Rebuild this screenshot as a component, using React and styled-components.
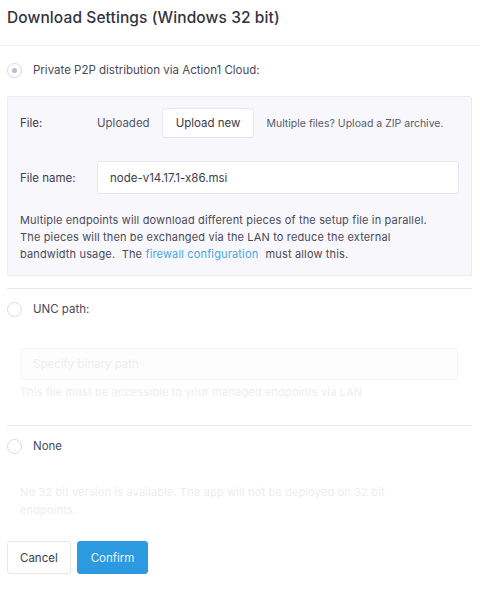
import React from "react";
import styled, { createGlobalStyle } from "styled-components";

const Global = createGlobalStyle`
  html, body { margin: 0; padding: 0; background: #fff; }
  body { font-family: Inter, "Noto Sans", sans-serif; color: #3c3c4a; }
  * { box-sizing: border-box; }
`;

const Page = styled.div`
  width: 480px;
  height: 593px;
  background: #fff;
  display: flex;
  flex-direction: column;
`;

const Title = styled.h1`
  margin: 0;
  padding: 7px 7px 0;
  height: 46px;
  font-size: 15.5px;
  font-weight: 500;
  color: #33333f;
  letter-spacing: 0.1px;
  line-height: 22px;
  border-bottom: 1px solid #ececf2;
`;

const Body = styled.div`
  padding: 0 8px 0 7px;
  display: flex;
  flex-direction: column;
`;

const Section = styled.div`
  display: flex;
  flex-direction: column;
  padding: ${(p) => p.$pad || "0"};
  border-bottom: ${(p) => (p.$divider ? "1px solid #e8e8ee" : "none")};
`;

const RadioRow = styled.label`
  display: flex;
  align-items: center;
  gap: 11px;
  height: 16px;
  font-size: 11.5px;
  color: #4a4a58;
`;

const Radio = styled.span`
  width: 15px;
  height: 15px;
  border-radius: 50%;
  border: 1px solid #d6dae6;
  background: #fff;
  display: flex;
  align-items: center;
  justify-content: center;
  &::after {
    content: "";
    width: 5px;
    height: 5px;
    border-radius: 50%;
    background: ${(p) => (p.$checked ? "#b9bfcc" : "transparent")};
  }
`;

const Panel = styled.div`
  margin-top: 18px;
  background: #f8f8fc;
  border: 1px solid #ececf3;
  border-radius: 2px;
  padding: 11px 12px 12px 12px;
  display: flex;
  flex-direction: column;
`;

const FieldRow = styled.div`
  display: flex;
  align-items: center;
  height: ${(p) => p.$h || "auto"};
  margin-top: ${(p) => p.$mt || "0"};
  padding: ${(p) => p.$pad || "0"};
`;

const FieldLabel = styled.span`
  width: 77px;
  font-size: 11.5px;
  color: #3c3c4a;
`;

const Muted = styled.span`
  font-size: 11.5px;
  color: #555563;
  margin-right: 12px;
`;

const Button = styled.button`
  font-family: inherit;
  height: ${(p) => p.$h || "30px"};
  padding: 0 ${(p) => p.$px || "12px"};
  border-radius: 3px;
  font-size: 11.5px;
  cursor: pointer;
  border: 1px solid ${(p) => (p.$primary ? "#2b9ae0" : "#e6e7ee")};
  background: ${(p) => (p.$primary ? "#2b9ae0" : "#fff")};
  color: ${(p) => (p.$primary ? "#e8f4ff" : "#3c3c4a")};
  font-weight: 400;
`;

const Hint = styled.span`
  font-size: 10.5px;
  color: #5a5a68;
  margin-left: 12px;
`;

const Input = styled.input`
  flex: 1;
  height: ${(p) => p.$h || "33px"};
  border: 1px solid ${(p) => (p.disabled ? "#f6f6f8" : "#e6e7ee")};
  background: ${(p) => (p.disabled ? "#fdfdfe" : "#fff")};
  border-radius: 3px;
  padding: 0 12px;
  font-family: inherit;
  font-size: 11.5px;
  color: #3c3c4a;
  outline: none;
  &::placeholder { color: #ededf1; }
`;

const Para = styled.p`
  margin: 18px 0 0;
  font-size: 11px;
  line-height: 17px;
  letter-spacing: 0.15px;
  color: #4a4a58;
`;

const Link = styled.a`
  color: #44a7e6;
  text-decoration: none;
  margin-right: 4px;
`;

const Faint = styled.p`
  margin: ${(p) => p.$m || "0"};
  font-size: 11px;
  line-height: 18px;
  letter-spacing: 0.15px;
  color: #ededf1;
`;

const Actions = styled.div`
  display: flex;
  gap: 6px;
  margin-top: 22px;
`;

export default function App() {
  return (
    <Page>
      <Global />
      <Title>Download Settings (Windows 32 bit)</Title>
      <Body>
        <Section $divider $pad="16px 0 12px">
          <RadioRow>
            <Radio $checked />
            Private P2P distribution via Action1 Cloud:
          </RadioRow>
          <Panel>
            <FieldRow $h="30px">
              <FieldLabel>File:</FieldLabel>
              <Muted>Uploaded</Muted>
              <Button $px="13px">Upload new</Button>
              <Hint>Multiple files? Upload a ZIP archive.</Hint>
            </FieldRow>
            <FieldRow $mt="23px">
              <FieldLabel>File name:</FieldLabel>
              <Input defaultValue="node-v14.17.1-x86.msi" />
            </FieldRow>
            <Para>
              Multiple endpoints will download different pieces of the setup file in parallel.
              <br />
              The pieces will then be exchanged via the LAN to reduce the external
              <br />
              bandwidth usage.&nbsp; The <Link href="#">firewall configuration</Link> must allow this.
            </Para>
          </Panel>
        </Section>
        <Section $divider $pad="12px 0 24px">
          <RadioRow>
            <Radio />
            UNC path:
          </RadioRow>
          <FieldRow $mt="31px" $pad="0 14px 0 13px">
            <Input $h="32px" disabled placeholder="Specify binary path" />
          </FieldRow>
          <Faint $m="3px 0 0 13px">This file must be accessible to your managed endpoints via LAN</Faint>
        </Section>
        <Section $pad="12px 0 0">
          <RadioRow>
            <Radio />
            None
          </RadioRow>
          <Faint $m="29px 40px 0 13px">
            No 32 bit version is available. The app will not be deployed on 32 bit
            <br />
            endpoints.
          </Faint>
          <Actions>
            <Button $h="33px" $px="12px">Cancel</Button>
            <Button $h="33px" $primary $px="13px">Confirm</Button>
          </Actions>
        </Section>
      </Body>
    </Page>
  );
}
